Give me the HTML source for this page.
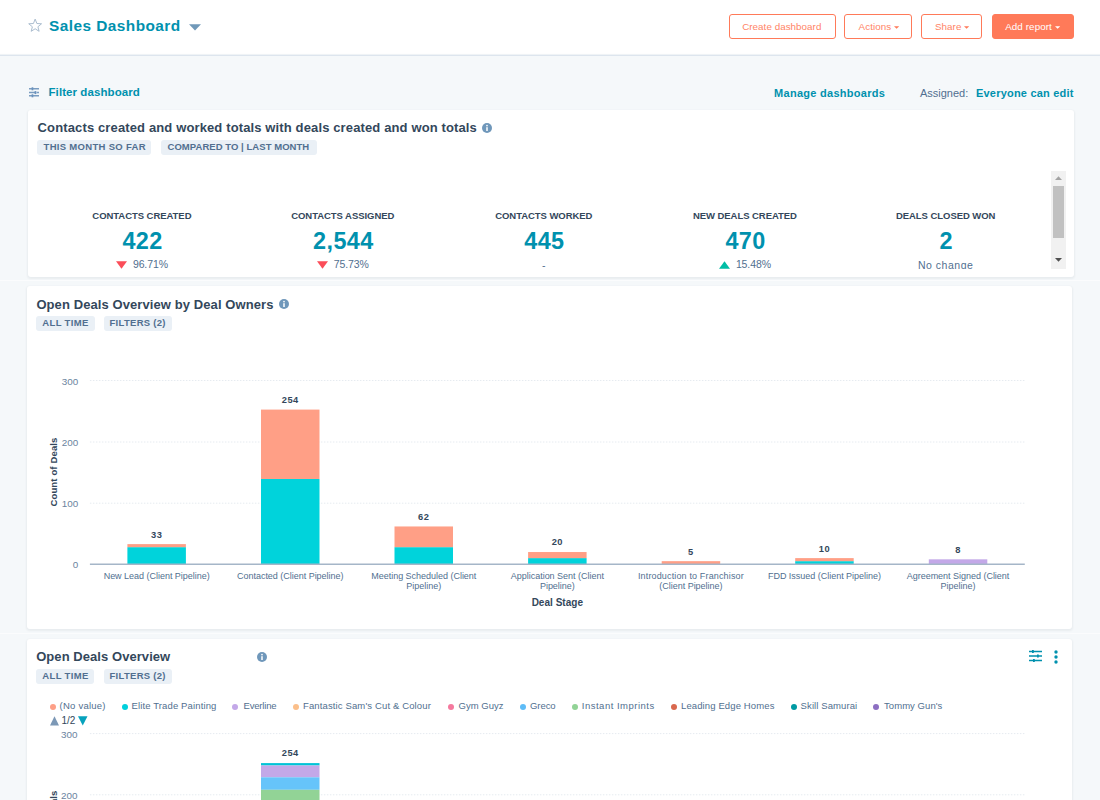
<!DOCTYPE html>
<html><head><meta charset="utf-8">
<style>
*{box-sizing:border-box;margin:0;padding:0}
html,body{width:1100px;height:800px;overflow:hidden;background:#f5f8fa;font-family:"Liberation Sans",sans-serif;color:#33475b}
.t{position:absolute;white-space:nowrap;line-height:1}
.abs{position:absolute}
.btn{position:absolute;top:14px;height:25px;border:1px solid #ff7a59;border-radius:3px;background:#fff}
.btn.fill{background:#ff7a59}
.card{position:absolute;background:#fff;border-radius:3px;box-shadow:0 1px 2px 1px rgba(45,62,80,0.055)}
.tag{position:absolute;height:15px;background:#eaf0f6;border-radius:3px}
</style></head>
<body>
<div class="abs" style="left:0;top:0;width:1100px;height:56px;background:#fff;border-bottom:1px solid #dde5ee;box-shadow:inset 0 -2px 1px -1px #eef2f6"></div>
<svg class="abs" style="left:27px;top:17px" width="17" height="17" viewBox="0 0 17 17"><path d="M8.15 2.10 L9.86 6.50 L14.57 6.76 L10.91 9.75 L12.12 14.31 L8.15 11.75 L4.18 14.31 L5.39 9.75 L1.73 6.76 L6.44 6.50 Z" fill="none" stroke="#a6b9cc" stroke-width="0.95" stroke-linejoin="round"/></svg>
<div class="t" style="top:18.09px;font-size:15.4px;font-weight:bold;color:#0091ae;letter-spacing:0.45px;left:49px;">Sales Dashboard</div>
<svg class="abs" style="left:189px;top:24px" width="12" height="7" viewBox="0 0 12 7"><path d="M0 0.3 L12 0.3 L6 6.6 Z" fill="#7099b9"/></svg>
<div class="btn" style="left:729px;width:107px"></div>
<div class="btn" style="left:844px;width:68px"></div>
<div class="btn" style="left:921px;width:61px"></div>
<div class="btn fill" style="left:992px;width:82px"></div>
<div class="t" style="top:21.72px;font-size:9.8px;font-weight:normal;color:#ff8466;letter-spacing:0.05px;left:742.2px;">Create dashboard</div>
<div class="t" style="top:21.72px;font-size:9.8px;font-weight:normal;color:#ff8466;letter-spacing:0.1px;left:858.5px;">Actions</div>
<svg class="abs" style="left:893.9px;top:25.5px" width="6" height="4" viewBox="0 0 6 4"><path d="M0 0.3 L5.2 0.3 L2.6 2.8 Z" fill="#ff7a59"/></svg>
<div class="t" style="top:21.72px;font-size:9.8px;font-weight:normal;color:#ff8466;letter-spacing:0.1px;left:934.9px;">Share</div>
<svg class="abs" style="left:963.7px;top:25.5px" width="6" height="4" viewBox="0 0 6 4"><path d="M0 0.3 L5.2 0.3 L2.6 2.8 Z" fill="#ff7a59"/></svg>
<div class="t" style="top:21.72px;font-size:9.8px;font-weight:normal;color:#fff;letter-spacing:0.1px;left:1005.2px;">Add report</div>
<svg class="abs" style="left:1055.4px;top:25.5px" width="6" height="4" viewBox="0 0 6 4"><path d="M0 0.3 L5.2 0.3 L2.6 2.8 Z" fill="#fff"/></svg>
<svg class="abs" style="left:28px;top:86px" width="12" height="12" viewBox="0 0 12 12"><g stroke="#7a9cc0" stroke-width="1.5"><path d="M1 2.8h10M1 6.6h6.6M8.6 6.6h2.4M1 9.8h10"/></g><g fill="#6a92bd"><rect x="3.6" y="1.3" width="1.7" height="3"/><rect x="6.6" y="5.1" width="1.7" height="3"/><rect x="3.6" y="8.3" width="1.7" height="3"/></g></svg>
<div class="t" style="top:86.50px;font-size:11.5px;font-weight:bold;color:#0091ae;letter-spacing:0.08px;left:48.5px;">Filter dashboard</div>
<div class="t" style="top:87.66px;font-size:11px;font-weight:bold;color:#0091ae;letter-spacing:0.28px;left:774.1px;">Manage dashboards</div>
<div class="t" style="top:87.66px;font-size:11px;font-weight:normal;color:#516f90;left:919.9px;">Assigned:</div>
<div class="t" style="top:87.66px;font-size:11px;font-weight:bold;color:#0091ae;letter-spacing:0.2px;left:976px;">Everyone can edit</div>
<div class="abs" style="left:0;top:280px;width:1100px;height:1px;background:#fbfcfd"></div>
<div class="abs" style="left:0;top:633px;width:1100px;height:1px;background:#fbfcfd"></div>
<div class="card" style="left:28px;top:110px;width:1046px;height:167px"></div>
<div class="t" style="top:121.10px;font-size:13px;font-weight:bold;color:#33475b;letter-spacing:0.13px;left:37.6px;">Contacts created and worked totals with deals created and won totals</div>
<svg class="abs" style="left:482px;top:122.5px" width="10" height="10" viewBox="0 0 10 10"><circle cx="5" cy="5" r="5" fill="#6f97ba"/><rect x="4.25" y="4.2" width="1.5" height="3.8" fill="#fff"/><circle cx="5" cy="2.6" r="0.85" fill="#fff"/></svg>
<div class="tag" style="left:37px;top:140px;width:114px"></div>
<div class="t" style="top:142.26px;font-size:9.5px;font-weight:bold;color:#516f90;letter-spacing:0.3px;left:43.6px;">THIS MONTH SO FAR</div>
<div class="tag" style="left:161px;top:140px;width:156px"></div>
<div class="t" style="top:142.26px;font-size:9.5px;font-weight:bold;color:#516f90;letter-spacing:0.05px;left:167.5px;">COMPARED TO | LAST MONTH</div>
<div class="abs" style="left:1051px;top:171px;width:15px;height:98px;background:#f1f1f1"></div>
<div class="abs" style="left:1052.5px;top:185.5px;width:11.5px;height:52.5px;background:#c1c1c1"></div>
<svg class="abs" style="left:1054px;top:175px" width="9" height="6" viewBox="0 0 9 6"><path d="M1 5 L8 5 L4.5 1.2 Z" fill="#a3a3a3"/></svg>
<svg class="abs" style="left:1054px;top:257px" width="9" height="6" viewBox="0 0 9 6"><path d="M1 1 L8 1 L4.5 4.8 Z" fill="#505050"/></svg>
<div class="abs" style="left:28px;top:171px;width:1023px;height:98px;overflow:hidden">
<div class="t" style="top:40.46px;font-size:9.5px;font-weight:bold;color:#33475b;letter-spacing:-0.05px;left:-186.1px;width:600px;text-align:center;">CONTACTS CREATED</div>
<div class="t" style="top:58.95px;font-size:23.4px;font-weight:bold;color:#0091ae;letter-spacing:0.4px;left:-185.5px;width:600px;text-align:center;">422</div>
<div class="t" style="left:-186.1px;width:600px;text-align:center;top:88px;font-size:10.5px;letter-spacing:-0.1px;color:#516f90"><svg width="11" height="8" viewBox="0 0 11 8" style="vertical-align:-0.5px;margin-right:6px"><path d="M0 0.3 L11 0.3 L5.5 7.7 Z" fill="#fb4d59"/></svg>96.71%</div>
<div class="t" style="top:40.46px;font-size:9.5px;font-weight:bold;color:#33475b;letter-spacing:-0.05px;left:14.800000000000011px;width:600px;text-align:center;">CONTACTS ASSIGNED</div>
<div class="t" style="top:58.95px;font-size:23.4px;font-weight:bold;color:#0091ae;letter-spacing:0.4px;left:15.400000000000034px;width:600px;text-align:center;">2,544</div>
<div class="t" style="left:14.800000000000011px;width:600px;text-align:center;top:88px;font-size:10.5px;letter-spacing:-0.1px;color:#516f90"><svg width="11" height="8" viewBox="0 0 11 8" style="vertical-align:-0.5px;margin-right:6px"><path d="M0 0.3 L11 0.3 L5.5 7.7 Z" fill="#fb4d59"/></svg>75.73%</div>
<div class="t" style="top:40.46px;font-size:9.5px;font-weight:bold;color:#33475b;letter-spacing:-0.05px;left:215.79999999999995px;width:600px;text-align:center;">CONTACTS WORKED</div>
<div class="t" style="top:58.95px;font-size:23.4px;font-weight:bold;color:#0091ae;letter-spacing:0.4px;left:216.39999999999998px;width:600px;text-align:center;">445</div>
<div class="t" style="top:88.83px;font-size:10.5px;font-weight:normal;color:#516f90;left:215.79999999999995px;width:600px;text-align:center;">-</div>
<div class="t" style="top:40.46px;font-size:9.5px;font-weight:bold;color:#33475b;letter-spacing:-0.05px;left:416.9px;width:600px;text-align:center;">NEW DEALS CREATED</div>
<div class="t" style="top:58.95px;font-size:23.4px;font-weight:bold;color:#0091ae;letter-spacing:0.4px;left:417.5px;width:600px;text-align:center;">470</div>
<div class="t" style="left:416.9px;width:600px;text-align:center;top:88px;font-size:10.5px;letter-spacing:-0.1px;color:#516f90"><svg width="11" height="8" viewBox="0 0 11 8" style="vertical-align:-0.5px;margin-right:6px"><path d="M0 7.7 L11 7.7 L5.5 0.3 Z" fill="#00bda5"/></svg>15.48%</div>
<div class="t" style="top:40.46px;font-size:9.5px;font-weight:bold;color:#33475b;letter-spacing:-0.05px;left:617.7px;width:600px;text-align:center;">DEALS CLOSED WON</div>
<div class="t" style="top:58.95px;font-size:23.4px;font-weight:bold;color:#0091ae;letter-spacing:0.4px;left:618.3000000000001px;width:600px;text-align:center;">2</div>
<div class="t" style="top:88.83px;font-size:10.5px;font-weight:normal;color:#516f90;letter-spacing:0.5px;left:617.7px;width:600px;text-align:center;">No change</div>
</div>
<div class="card" style="left:27.3px;top:286.4px;width:1045.1px;height:342.9px"></div>
<div class="t" style="top:297.60px;font-size:13px;font-weight:bold;color:#33475b;letter-spacing:0.09px;left:36.4px;">Open Deals Overview by Deal Owners</div>
<svg class="abs" style="left:278.5px;top:299px" width="10" height="10" viewBox="0 0 10 10"><circle cx="5" cy="5" r="5" fill="#6f97ba"/><rect x="4.25" y="4.2" width="1.5" height="3.8" fill="#fff"/><circle cx="5" cy="2.6" r="0.85" fill="#fff"/></svg>
<div class="tag" style="left:36px;top:316px;width:59px"></div>
<div class="t" style="top:318.26px;font-size:9.5px;font-weight:bold;color:#516f90;letter-spacing:0.34px;left:42.3px;">ALL TIME</div>
<div class="tag" style="left:104px;top:316px;width:68px"></div>
<div class="t" style="top:318.26px;font-size:9.5px;font-weight:bold;color:#516f90;letter-spacing:0.29px;left:109.5px;">FILTERS (2)</div>
<svg class="abs" style="left:0;top:360px" width="1100" height="220" viewBox="0 360 1100 220"><line x1="89.9" y1="503.2" x2="1024.8" y2="503.2" stroke="#e6ebf0" stroke-width="1" stroke-dasharray="1.5,1.5"/><line x1="89.9" y1="442.0" x2="1024.8" y2="442.0" stroke="#e6ebf0" stroke-width="1" stroke-dasharray="1.5,1.5"/><line x1="89.9" y1="380.5" x2="1024.8" y2="380.5" stroke="#e6ebf0" stroke-width="1" stroke-dasharray="1.5,1.5"/><rect x="127.4" y="547.16" width="58.5" height="17.04" fill="#00d3db"/><rect x="127.4" y="544.11" width="58.5" height="3.04" fill="#ff9f86"/><rect x="261.0" y="478.98" width="58.5" height="85.22" fill="#00d3db"/><rect x="261.0" y="409.59" width="58.5" height="69.39" fill="#ff9f86"/><rect x="394.5" y="547.16" width="58.5" height="17.04" fill="#00d3db"/><rect x="394.5" y="526.46" width="58.5" height="20.70" fill="#ff9f86"/><rect x="528.1" y="558.11" width="58.5" height="6.09" fill="#00d3db"/><rect x="528.1" y="552.03" width="58.5" height="6.09" fill="#ff9f86"/><rect x="661.7" y="561.16" width="58.5" height="3.04" fill="#ff9f86"/><rect x="795.2" y="561.16" width="58.5" height="3.04" fill="#00d3db"/><rect x="795.2" y="558.11" width="58.5" height="3.04" fill="#ff9f86"/><rect x="928.8" y="559.33" width="58.5" height="4.87" fill="#c3a8e8"/><line x1="89.9" y1="564.2" x2="1024.8" y2="564.2" stroke="#a5b6c8" stroke-width="1.6"/></svg>
<div class="t" style="top:560.26px;font-size:9.9px;font-weight:normal;color:#6b84a0;left:-521.8px;width:600px;text-align:right;">0</div>
<div class="t" style="top:499.26px;font-size:9.9px;font-weight:normal;color:#6b84a0;left:-521.8px;width:600px;text-align:right;">100</div>
<div class="t" style="top:438.06px;font-size:9.9px;font-weight:normal;color:#6b84a0;left:-521.8px;width:600px;text-align:right;">200</div>
<div class="t" style="top:376.56px;font-size:9.9px;font-weight:normal;color:#6b84a0;left:-521.8px;width:600px;text-align:right;">300</div>
<div class="t" style="top:530.50px;font-size:9.3px;font-weight:bold;color:#33475b;letter-spacing:0.5px;left:-143.32142857142856px;width:600px;text-align:center;">33</div>
<div class="t" style="top:395.98px;font-size:9.3px;font-weight:bold;color:#33475b;letter-spacing:0.5px;left:-9.764285714285734px;width:600px;text-align:center;">254</div>
<div class="t" style="top:512.85px;font-size:9.3px;font-weight:bold;color:#33475b;letter-spacing:0.5px;left:123.79285714285709px;width:600px;text-align:center;">62</div>
<div class="t" style="top:538.41px;font-size:9.3px;font-weight:bold;color:#33475b;letter-spacing:0.5px;left:257.35px;width:600px;text-align:center;">20</div>
<div class="t" style="top:547.54px;font-size:9.3px;font-weight:bold;color:#33475b;letter-spacing:0.5px;left:390.90714285714284px;width:600px;text-align:center;">5</div>
<div class="t" style="top:544.50px;font-size:9.3px;font-weight:bold;color:#33475b;letter-spacing:0.5px;left:524.4642857142857px;width:600px;text-align:center;">10</div>
<div class="t" style="top:545.72px;font-size:9.3px;font-weight:bold;color:#33475b;letter-spacing:0.5px;left:658.0214285714285px;width:600px;text-align:center;">8</div>
<div class="t" style="top:571.53px;font-size:9px;font-weight:normal;color:#516f90;letter-spacing:-0.02px;left:-143.32142857142856px;width:600px;text-align:center;">New Lead (Client Pipeline)</div>
<div class="t" style="top:571.53px;font-size:9px;font-weight:normal;color:#516f90;letter-spacing:-0.02px;left:-9.764285714285734px;width:600px;text-align:center;">Contacted (Client Pipeline)</div>
<div class="t" style="top:571.53px;font-size:9px;font-weight:normal;color:#516f90;letter-spacing:-0.02px;left:123.79285714285709px;width:600px;text-align:center;">Meeting Scheduled (Client</div>
<div class="t" style="top:582.03px;font-size:9px;font-weight:normal;color:#516f90;letter-spacing:-0.02px;left:123.79285714285709px;width:600px;text-align:center;">Pipeline)</div>
<div class="t" style="top:571.53px;font-size:9px;font-weight:normal;color:#516f90;letter-spacing:-0.02px;left:257.35px;width:600px;text-align:center;">Application Sent (Client</div>
<div class="t" style="top:582.03px;font-size:9px;font-weight:normal;color:#516f90;letter-spacing:-0.02px;left:257.35px;width:600px;text-align:center;">Pipeline)</div>
<div class="t" style="top:571.53px;font-size:9px;font-weight:normal;color:#516f90;letter-spacing:0.15px;left:390.90714285714284px;width:600px;text-align:center;">Introduction to Franchisor</div>
<div class="t" style="top:582.03px;font-size:9px;font-weight:normal;color:#516f90;letter-spacing:-0.02px;left:390.90714285714284px;width:600px;text-align:center;">(Client Pipeline)</div>
<div class="t" style="top:571.53px;font-size:9px;font-weight:normal;color:#516f90;letter-spacing:-0.02px;left:524.4642857142857px;width:600px;text-align:center;">FDD Issued (Client Pipeline)</div>
<div class="t" style="top:571.53px;font-size:9px;font-weight:normal;color:#516f90;letter-spacing:-0.02px;left:658.0214285714285px;width:600px;text-align:center;">Agreement Signed (Client</div>
<div class="t" style="top:582.03px;font-size:9px;font-weight:normal;color:#516f90;letter-spacing:-0.02px;left:658.0214285714285px;width:600px;text-align:center;">Pipeline)</div>
<div class="t" style="left:13.5px;top:467px;width:80px;height:10px;text-align:center;font-size:9.5px;font-weight:bold;color:#33475b;letter-spacing:0.15px;transform:rotate(-90deg)">Count of Deals</div>
<div class="t" style="top:597.60px;font-size:10px;font-weight:bold;color:#33475b;letter-spacing:0.02px;left:257.29999999999995px;width:600px;text-align:center;">Deal Stage</div>
<div class="card" style="left:27.3px;top:639px;width:1045.1px;height:200px"></div>
<div class="t" style="top:650.10px;font-size:13px;font-weight:bold;color:#33475b;letter-spacing:0.06px;left:36.2px;">Open Deals Overview</div>
<svg class="abs" style="left:256.5px;top:652px" width="10" height="10" viewBox="0 0 10 10"><circle cx="5" cy="5" r="5" fill="#6f97ba"/><rect x="4.25" y="4.2" width="1.5" height="3.8" fill="#fff"/><circle cx="5" cy="2.6" r="0.85" fill="#fff"/></svg>
<div class="tag" style="left:36px;top:669px;width:58px"></div>
<div class="t" style="top:671.26px;font-size:9.5px;font-weight:bold;color:#516f90;letter-spacing:0.34px;left:42.3px;">ALL TIME</div>
<div class="tag" style="left:104px;top:669px;width:68px"></div>
<div class="t" style="top:671.26px;font-size:9.5px;font-weight:bold;color:#516f90;letter-spacing:0.29px;left:109.5px;">FILTERS (2)</div>
<svg class="abs" style="left:1029px;top:650px" width="13" height="12" viewBox="0 0 13 12"><g stroke="#0091ae" stroke-width="1.3"><path d="M0 1.5h13M0 6h13M0 10.5h13"/></g><g fill="#0091ae"><rect x="3" y="0" width="1.8" height="3"/><rect x="8" y="4.5" width="1.8" height="3"/><rect x="4" y="9" width="1.8" height="3"/></g></svg>
<svg class="abs" style="left:1053px;top:649.5px" width="6" height="14" viewBox="0 0 6 14"><g fill="#0091ae"><circle cx="3" cy="2" r="1.7"/><circle cx="3" cy="7" r="1.7"/><circle cx="3" cy="12" r="1.7"/></g></svg>
<div class="abs" style="left:49.5px;top:704px;width:6px;height:6px;border-radius:50%;background:#fd9f87"></div>
<div class="t" style="top:700.86px;font-size:9.5px;font-weight:normal;color:#516f90;letter-spacing:0.24px;left:59.5px;">(No value)</div>
<div class="abs" style="left:122px;top:704px;width:6px;height:6px;border-radius:50%;background:#00d0dc"></div>
<div class="t" style="top:700.86px;font-size:9.5px;font-weight:normal;color:#516f90;letter-spacing:0.13px;left:131.5px;">Elite Trade Painting</div>
<div class="abs" style="left:232px;top:704px;width:6px;height:6px;border-radius:50%;background:#c3a8e8"></div>
<div class="t" style="top:700.86px;font-size:9.5px;font-weight:normal;color:#516f90;letter-spacing:-0.18px;left:243.5px;">Everline</div>
<div class="abs" style="left:292.5px;top:704px;width:6px;height:6px;border-radius:50%;background:#fbbf8a"></div>
<div class="t" style="top:700.86px;font-size:9.5px;font-weight:normal;color:#516f90;letter-spacing:0.13px;left:303px;">Fantastic Sam's Cut &amp; Colour</div>
<div class="abs" style="left:447.5px;top:704px;width:6px;height:6px;border-radius:50%;background:#f5799e"></div>
<div class="t" style="top:700.86px;font-size:9.5px;font-weight:normal;color:#516f90;letter-spacing:0.02px;left:458.5px;">Gym Guyz</div>
<div class="abs" style="left:519.5px;top:704px;width:6px;height:6px;border-radius:50%;background:#5ebcf7"></div>
<div class="t" style="top:700.86px;font-size:9.5px;font-weight:normal;color:#516f90;letter-spacing:-0.06px;left:530px;">Greco</div>
<div class="abs" style="left:571.7px;top:704px;width:6px;height:6px;border-radius:50%;background:#92d396"></div>
<div class="t" style="top:700.86px;font-size:9.5px;font-weight:normal;color:#516f90;letter-spacing:0.5px;left:581.8px;">Instant Imprints</div>
<div class="abs" style="left:670.5px;top:704px;width:6px;height:6px;border-radius:50%;background:#d9684e"></div>
<div class="t" style="top:700.86px;font-size:9.5px;font-weight:normal;color:#516f90;letter-spacing:0.12px;left:681px;">Leading Edge Homes</div>
<div class="abs" style="left:790.5px;top:704px;width:6px;height:6px;border-radius:50%;background:#009aa3"></div>
<div class="t" style="top:700.86px;font-size:9.5px;font-weight:normal;color:#516f90;letter-spacing:0.1px;left:800.6px;">Skill Samurai</div>
<div class="abs" style="left:872.9px;top:704px;width:6px;height:6px;border-radius:50%;background:#8d6fc2"></div>
<div class="t" style="top:700.86px;font-size:9.5px;font-weight:normal;color:#516f90;letter-spacing:0.06px;left:884px;">Tommy Gun's</div>
<svg class="abs" style="left:49.5px;top:716px" width="10" height="10" viewBox="0 0 10 10"><path d="M0 9.5 L9 9.5 L4.5 0.3 Z" fill="#7c98b6"/></svg>
<div class="t" style="top:715.50px;font-size:10px;font-weight:normal;color:#33475b;left:61.4px;">1/2</div>
<svg class="abs" style="left:78.3px;top:716px" width="10" height="10" viewBox="0 0 10 10"><path d="M0 0.3 L9.5 0.3 L4.75 9.5 Z" fill="#07a2bd"/></svg>
<svg class="abs" style="left:0;top:720px" width="1100" height="80" viewBox="0 720 1100 80"><line x1="89.9" y1="733.6" x2="1024.8" y2="733.6" stroke="#e6ebf0" stroke-width="1" stroke-dasharray="1.5,1.5"/><line x1="89.9" y1="794.8" x2="1024.8" y2="794.8" stroke="#e6ebf0" stroke-width="1" stroke-dasharray="1.5,1.5"/><rect x="261.0" y="763.1" width="58.5" height="2.40" fill="#00c4d6"/><rect x="261.0" y="765.5" width="58.5" height="11.80" fill="#c3a8e8"/><rect x="261.0" y="777.3" width="58.5" height="12.50" fill="#66c4fa"/><rect x="261.0" y="789.8" width="58.5" height="10.20" fill="#92d396"/></svg>
<div class="t" style="top:729.66px;font-size:9.9px;font-weight:normal;color:#6b84a0;left:-522.5px;width:600px;text-align:right;">300</div>
<div class="t" style="top:790.86px;font-size:9.9px;font-weight:normal;color:#6b84a0;left:-522.5px;width:600px;text-align:right;">200</div>
<div class="t" style="top:749.49px;font-size:9.3px;font-weight:bold;color:#33475b;letter-spacing:0.5px;left:-9.764285714285734px;width:600px;text-align:center;">254</div>
<div class="t" style="left:13.5px;top:820px;width:80px;height:10px;text-align:center;font-size:9.5px;font-weight:bold;color:#33475b;letter-spacing:0.15px;transform:rotate(-90deg)">Count of Deals</div>
</body></html>
